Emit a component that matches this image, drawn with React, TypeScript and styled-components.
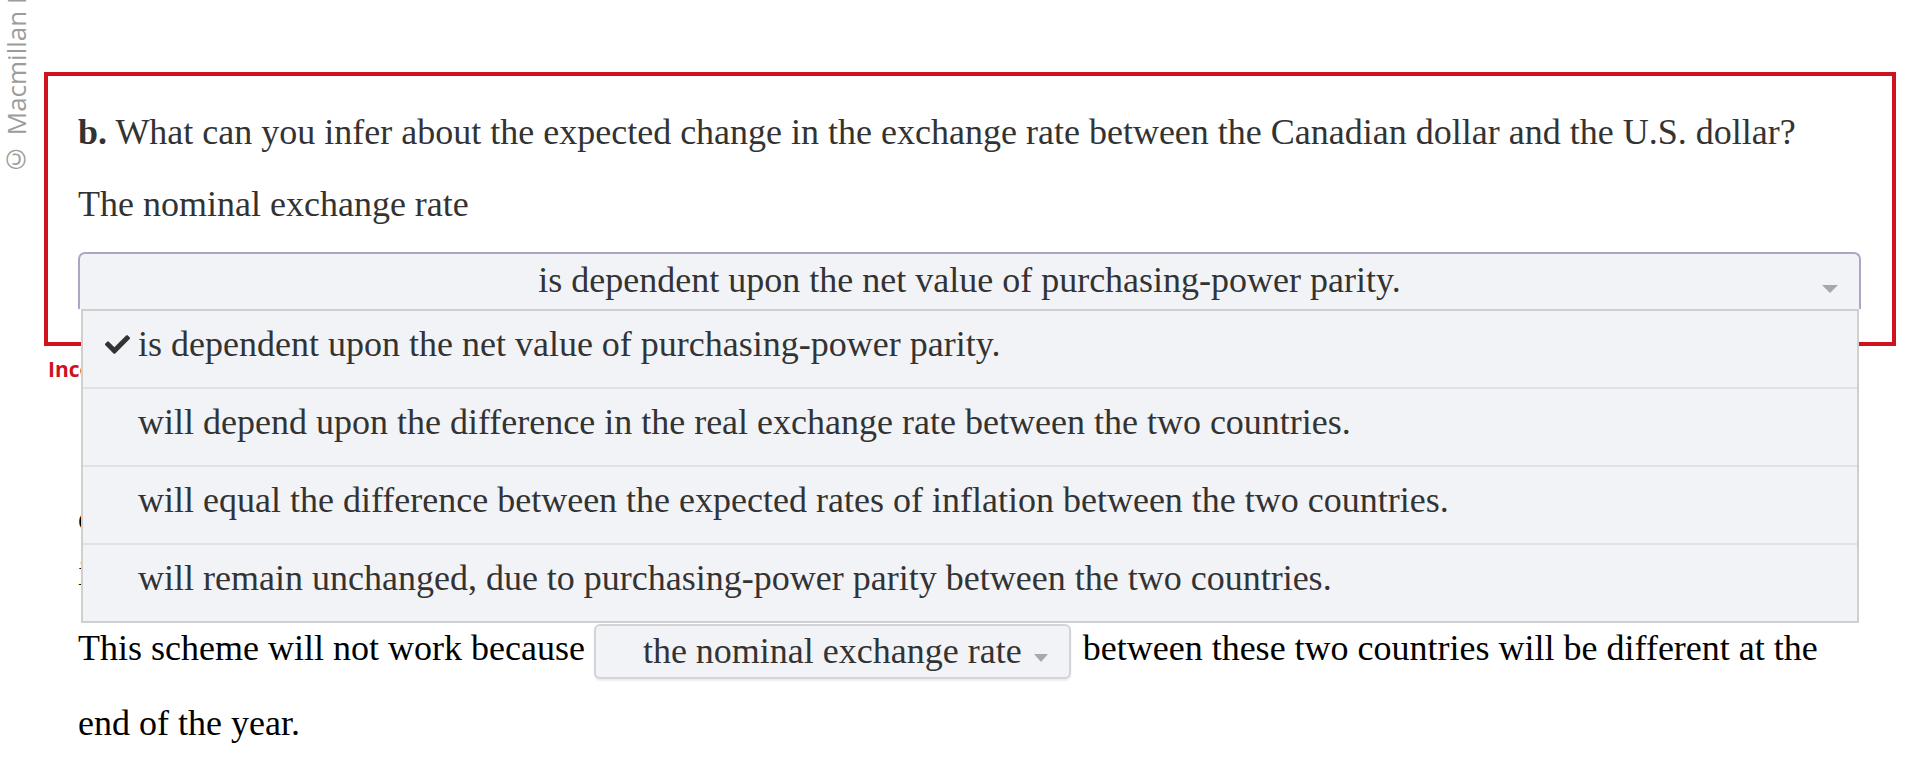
import React from "react";
import styled, { createGlobalStyle } from "styled-components";
import { FaCheck } from "react-icons/fa";

const options = [
  "is dependent upon the net value of purchasing-power parity.",
  "will depend upon the difference in the real exchange rate between the two countries.",
  "will equal the difference between the expected rates of inflation between the two countries.",
  "will remain unchanged, due to purchasing-power parity between the two countries.",
];

const App: React.FC = () => {
  const selected = 0;

  return (
    <>
      <GlobalStyle />
      <Page>
        <Side>
          <SideText>© Macmillan Learning</SideText>
        </Side>
        <Main>
          <QuestionBox>
            <Question>
              <strong>b.</strong> What can you infer about the expected change in the exchange rate
              between the Canadian dollar and the U.S. dollar?
            </Question>
            <Prompt>The nominal exchange rate</Prompt>
            <SelectWrap>
              <Select>
                <span />
                <SelectValue>{options[selected]}</SelectValue>
                <ArrowCell>
                  <Caret />
                </ArrowCell>
              </Select>
              <Menu>
                {options.map((option, index) => (
                  <MenuItem key={index}>
                    <CheckCell>{index === selected && <FaCheck size={25} />}</CheckCell>
                    {option}
                  </MenuItem>
                ))}
              </Menu>
            </SelectWrap>
          </QuestionBox>
          <Feedback>Incorrect</Feedback>
          <Body>
            <Paragraph>
              <strong>c.</strong> Suppose that you could borrow in Canada at the Canadian interest rate, convert the
              money into U.S. dollars and invest it in a one-year U.S. bond, and then convert the proceeds
              back into Canadian dollars at the end of the year.
            </Paragraph>
            <Sentence>
              This scheme will not work because{" "}
              <InlineSelect>
                the nominal exchange rate
                <Caret $small />
              </InlineSelect>{" "}
              between these two countries will be different at the end of the year.
            </Sentence>
          </Body>
        </Main>
      </Page>
    </>
  );
};

const GlobalStyle = createGlobalStyle`
  html, body {
    margin: 0;
    padding: 0;
    background: #ffffff;
  }
  body {
    font-family: "Liberation Serif", "Times New Roman", serif;
    overflow: hidden;
  }
`;

const Page = styled.div`
  display: flex;
  width: 1916px;
  height: 758px;
  overflow: hidden;
`;

const Side = styled.div`
  width: 44px;
  flex-shrink: 0;
`;

const SideText = styled.div`
  writing-mode: vertical-rl;
  transform: rotate(180deg);
  height: 178px;
  width: 30px;
  margin-left: 1px;
  overflow: hidden;
  white-space: nowrap;
  font-family: "Open Sans", sans-serif;
  font-size: 26px;
  line-height: 30px;
  color: #9c9c9c;
`;

const Main = styled.div`
  flex: 1;
  padding: 72px 20px 0 0;
`;

const QuestionBox = styled.div`
  border: 4px solid #d0121e;
  padding: 29px 31px 33px 30px;
`;

const Question = styled.p`
  margin: 0;
  font-size: 36px;
  line-height: 54px;
  color: #333333;
`;

const Prompt = styled.p`
  margin: 18px 0 21px;
  font-size: 36px;
  line-height: 54px;
  color: #333333;
`;

const SelectWrap = styled.div`
  position: relative;
`;

const Select = styled.div`
  display: grid;
  grid-template-columns: 1fr auto 1fr;
  align-items: center;
  box-sizing: border-box;
  height: 57px;
  padding-bottom: 4px;
  background: #f2f3f7;
  border: 2px solid #aba7c2;
  border-bottom: none;
  border-radius: 7px 7px 0 0;
`;

const SelectValue = styled.span`
  font-size: 36px;
  color: #333333;
  white-space: nowrap;
`;

const ArrowCell = styled.span`
  display: flex;
  justify-content: flex-end;
  padding: 18px 21px 0 0;
`;

const Caret = styled.span<{ $small?: boolean }>`
  display: inline-block;
  width: 0;
  height: 0;
  border-left: ${(p) => (p.$small ? 7 : 8)}px solid transparent;
  border-right: ${(p) => (p.$small ? 7 : 8)}px solid transparent;
  border-top: 8px solid #a8a8a8;
  margin-left: ${(p) => (p.$small ? 12 : 0)}px;
  margin-top: ${(p) => (p.$small ? 12 : 0)}px;
`;

const Menu = styled.div`
  position: absolute;
  top: 100%;
  left: 3px;
  right: 2px;
  z-index: 10;
  background: #f2f3f7;
  border: 2px solid #cfcfcf;
`;

const MenuItem = styled.div`
  display: flex;
  align-items: center;
  box-sizing: border-box;
  height: 76px;
  padding-bottom: 10px;
  font-size: 36px;
  color: #333333;
  white-space: nowrap;
  & + & {
    height: 78px;
    border-top: 2px solid #e0e1e5;
  }
`;

const CheckCell = styled.span`
  display: flex;
  justify-content: flex-end;
  width: 47px;
  margin-right: 8px;
  color: #333333;
`;

const Feedback = styled.div`
  margin-top: 10px;
  padding-left: 4px;
  font-family: "Open Sans", sans-serif;
  font-weight: 700;
  font-size: 21px;
  line-height: 26px;
  color: #d0121e;
`;

const Body = styled.div`
  padding: 0 35px 0 34px;
`;

const Paragraph = styled.p`
  margin: 109px 0 0;
  font-size: 36px;
  line-height: 55px;
  color: #000000;
`;

const Sentence = styled.p`
  margin: 10px 0 0;
  font-size: 36px;
  line-height: 75px;
  color: #000000;
`;

const InlineSelect = styled.span`
  display: inline-flex;
  align-items: center;
  box-sizing: border-box;
  height: 55px;
  padding: 0 21px 0 47px;
  margin: 0 3px 0 0;
  vertical-align: middle;
  background: #f2f3f7;
  border: 2px solid #d4d4d8;
  border-radius: 6px;
  box-shadow: 0 2px 2px rgba(0, 0, 0, 0.08);
  color: #333333;
  white-space: nowrap;
`;

export default App;
